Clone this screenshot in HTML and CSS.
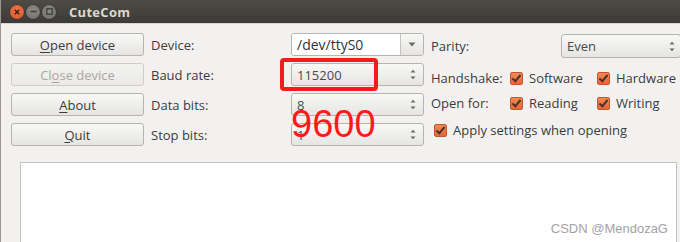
FILE: index.html
```html
<!DOCTYPE html>
<html>
<head>
<meta charset="utf-8">
<link rel="stylesheet" href="styles.css">
</head>
<body>
<div class="window">
  <div class="titlebar">
    <div class="wbtns">
      <span class="wb close"><svg width="14" height="14" viewBox="0 0 14 14"><path d="M4.8 4.8L9.2 9.2M9.2 4.8L4.8 9.2" stroke="#3a2418" stroke-width="1.6"/></svg></span>
      <span class="wb"><svg width="13" height="13" viewBox="0 0 13 13"><path d="M3.5 6.5H9.5" stroke="#3d3c38" stroke-width="1.6"/></svg></span>
      <span class="wb"><svg width="13" height="13" viewBox="0 0 13 13"><rect x="3.8" y="3.8" width="5.4" height="5.4" fill="none" stroke="#3d3c38" stroke-width="1.3"/></svg></span>
    </div>
    <div class="title">CuteCom</div>
  </div>
  <div class="main">
    <div class="controls">
      <div class="col">
        <div class="btn"><span class="u">O</span>pen device</div>
        <div class="btn disabled">Cl<span class="u">o</span>se device</div>
        <div class="btn"><span class="u">A</span>bout</div>
        <div class="btn"><span class="u">Q</span>uit</div>
      </div>
      <div class="col labels">
        <div class="lbl">Device:</div>
        <div class="lbl">Baud rate:</div>
        <div class="lbl">Data bits:</div>
        <div class="lbl">Stop bits:</div>
      </div>
      <div class="col fields">
        <div class="combo">
          <div class="edit">/dev/ttyS0</div>
          <div class="drop"><svg width="8" height="5" viewBox="0 0 8 5"><path d="M0.5 0.5H7.5L4 4.5Z" fill="#6a6a66"/></svg></div>
        </div>
        <div class="spin"><span>115200</span><svg class="arr" width="6" height="11" viewBox="0 0 6 11"><path d="M0.5 3.5L3 0.8L5.5 3.5Z M0.5 7.5L3 10.2L5.5 7.5Z" fill="#6a6a66"/></svg></div>
        <div class="spin"><span>8</span><svg class="arr" width="6" height="11" viewBox="0 0 6 11"><path d="M0.5 3.5L3 0.8L5.5 3.5Z M0.5 7.5L3 10.2L5.5 7.5Z" fill="#6a6a66"/></svg></div>
        <div class="spin"><span>1</span><svg class="arr" width="6" height="11" viewBox="0 0 6 11"><path d="M0.5 3.5L3 0.8L5.5 3.5Z M0.5 7.5L3 10.2L5.5 7.5Z" fill="#6a6a66"/></svg></div>
        <div class="redbox"></div>
        <div class="redtext">9600</div>
      </div>
      <div class="col right">
        <div class="rrow r1">
          <div class="rlbl wide">Parity:</div>
          <div class="spin parity"><span>Even</span><svg class="arr" width="6" height="11" viewBox="0 0 6 11"><path d="M0.5 3.5L3 0.8L5.5 3.5Z M0.5 7.5L3 10.2L5.5 7.5Z" fill="#6a6a66"/></svg></div>
        </div>
        <div class="rrow r2">
          <div class="rlbl">Handshake:</div>
          <div class="chk first"><span class="box"></span>Software</div>
          <div class="chk"><span class="box"></span>Hardware</div>
        </div>
        <div class="rrow r3">
          <div class="rlbl">Open for:</div>
          <div class="chk first"><span class="box"></span>Reading</div>
          <div class="chk"><span class="box"></span>Writing</div>
        </div>
        <div class="rrow r4">
          <div class="chk apply"><span class="box"></span>Apply settings when opening</div>
        </div>
      </div>
    </div>
    <div class="output">
      <div class="wm">CSDN @MendozaG</div>
    </div>
  </div>
</div>
</body>
</html>
```

FILE: styles.css
```css
html, body {
  margin: 0;
  padding: 0;
  width: 680px;
  height: 242px;
  overflow: hidden;
  background: #f2f1f0;
  font-family: "Open Sans", "DejaVu Sans", sans-serif;
  font-size: 13px;
  color: #3c3c3c;
}
.window {
  border-left: 1px solid #9a9893;
  height: 242px;
  box-sizing: border-box;
  overflow: hidden;
}
.titlebar {
  height: 23px;
  background: linear-gradient(#4c4b46, #3c3b37);
  border-bottom: 1px solid #d8d6d2;
  display: flex;
  align-items: center;
}
.wbtns {
  display: flex;
  align-items: center;
  gap: 2px;
  margin-left: 9px;
}
.wb {
  width: 14px;
  height: 14px;
  border-radius: 50%;
  background: radial-gradient(circle at 50% 40%, #8e8d88, #6c6b66);
  display: flex;
  align-items: center;
  justify-content: center;
  box-shadow: 0 0 0 0.5px #2e2d2a;
}
.wb.close {
  background: radial-gradient(circle at 50% 40%, #f2774b, #d9501f);
}
.title {
  margin-left: 13px;
  color: #dcd8cf;
  font-weight: bold;
  font-size: 13px;
  letter-spacing: 0.3px;
}
.main {
  padding: 9px 0 0 10px;
}
.controls {
  display: flex;
  gap: 7px;
}
.col {
  display: flex;
  flex-direction: column;
  gap: 7px;
  flex-shrink: 0;
}
.btn {
  width: 133px;
  height: 23px;
  box-sizing: border-box;
  border: 1px solid #b6b4af;
  border-radius: 3px;
  background: linear-gradient(#f8f8f7, #e6e5e3);
  display: flex;
  align-items: center;
  justify-content: center;
  color: #3c3c3c;
}
.btn.disabled {
  color: #a9a7a3;
  border-color: #cfcdc9;
  background: linear-gradient(#f3f3f2, #ebeae8);
}
.u {
  text-decoration: underline;
  text-underline-offset: 2px;
}
.labels {
  width: 133px;
}
.lbl {
  height: 23px;
  display: flex;
  align-items: center;
}
.fields {
  width: 133px;
  position: relative;
}
.combo {
  height: 23px;
  display: flex;
  box-sizing: border-box;
  border: 1px solid #b6b4af;
  border-radius: 3px;
  overflow: hidden;
}
.edit {
  flex: 1;
  background: #fff;
  display: flex;
  align-items: center;
  padding-left: 5px;
  font-size: 14px;
  color: #333;
}
.drop {
  width: 22px;
  border-left: 1px solid #c6c4bf;
  background: linear-gradient(#f8f8f7, #e6e5e3);
  display: flex;
  align-items: center;
  justify-content: center;
}
.spin {
  height: 23px;
  box-sizing: border-box;
  border: 1px solid #b6b4af;
  border-radius: 3px;
  background: linear-gradient(#f8f8f7, #e6e5e3);
  display: flex;
  align-items: center;
  justify-content: space-between;
  padding: 0 7px 0 5px;
  color: #4a4a4a;
}
.redbox {
  position: absolute;
  left: -11px;
  top: 25px;
  width: 98px;
  height: 33px;
  box-sizing: border-box;
  border: 4px solid #f21c1c;
  border-radius: 4px;
}
.redtext {
  position: absolute;
  left: 0;
  top: 69px;
  color: #ff1a1a;
  font-family: "Liberation Sans", Arial, sans-serif;
  font-size: 38px;
  line-height: 44px;
}
.right {
  gap: 0;
  padding-top: 1px;
}
.rrow {
  display: flex;
  align-items: center;
  height: 20px;
}
.r1 { height: 24px; }
.r2 { margin-top: 10px; }
.r3 { margin-top: 5px; }
.r4 { margin-top: 7px; }
.rlbl {
  width: 79px;
}
.rlbl.wide {
  width: 130px;
}
.parity {
  width: 120px;
  height: 24px;
  padding-right: 5px;
}
.chk {
  display: flex;
  align-items: center;
  gap: 6px;
}
.chk.first {
  width: 87px;
}
.chk.apply {
  margin-left: 3px;
}
.box {
  width: 13px;
  height: 13px;
  box-sizing: border-box;
  border: 1px solid #c4562a;
  border-radius: 2px;
  background: linear-gradient(#f08a55, #e0683a);
  position: relative;
}
.box::after {
  content: "";
  position: absolute;
  left: 3px;
  top: 0px;
  width: 3px;
  height: 7px;
  border-right: 2px solid #4b3226;
  border-bottom: 2px solid #4b3226;
  transform: rotate(40deg);
}
.output {
  margin: 16px 0 0 9px;
  width: 657px;
  height: 100px;
  box-sizing: border-box;
  background: #fff;
  border: 1px solid #c4c2bd;
  position: relative;
}
.wm {
  position: absolute;
  right: 8px;
  top: 58px;
  font-family: "Liberation Sans", Arial, sans-serif;
  font-size: 13px;
  color: #a3a3a3;
}
```
